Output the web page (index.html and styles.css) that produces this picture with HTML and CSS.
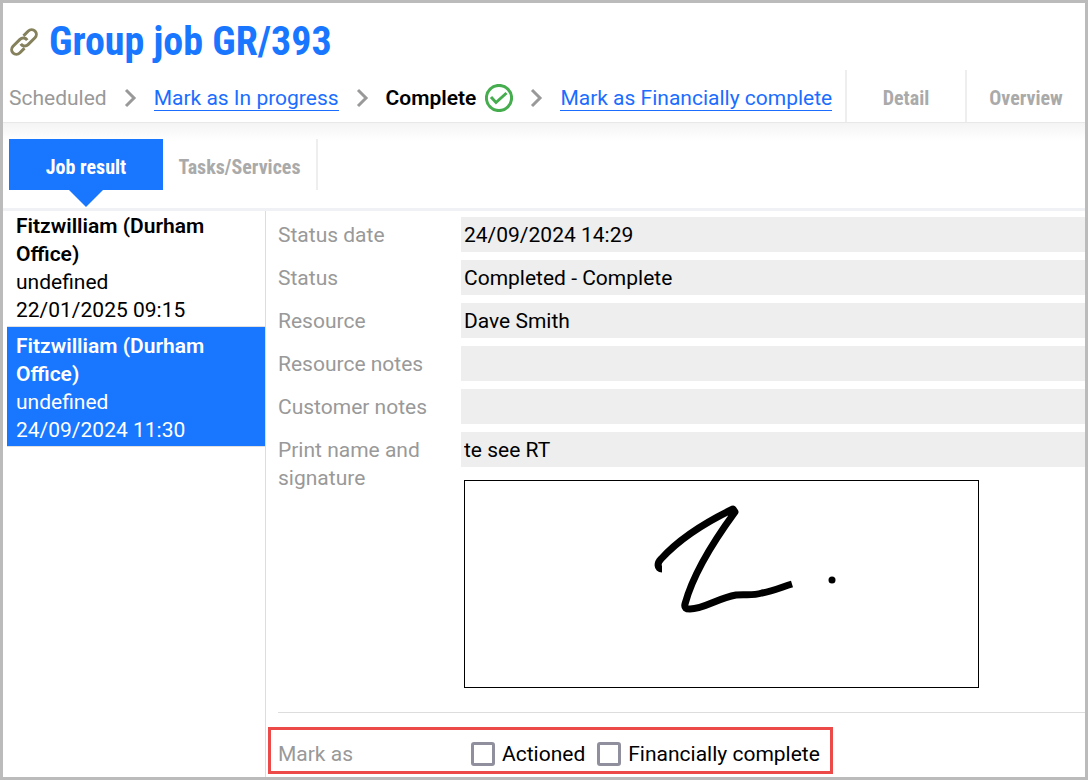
FILE: index.html
```html
<!DOCTYPE html>
<html lang="en">
<head>
    <meta charset="UTF-8">
    <meta name="viewport" content="width=device-width, initial-scale=1.0">
    <title>Group job GR/393</title>
    <link rel="stylesheet" href="styles.css">
</head>
<body>

<div class="page">
    <header class="header">
        <div class="title">
            <svg class="link-icon" width="28" height="28" viewBox="0 0 28 28">
                <g transform="rotate(-45 14 14)">
                    <path d="M10 18.700H3.200a4.700 4.700 0 0 1 0-9.400H13a4.700 4.700 0 0 1 4.600 5.700"/>
                    <path d="M18 9.300h6.800a4.700 4.700 0 0 1 0 9.400H15a4.700 4.700 0 0 1-4.600-5.700"/>
                </g>
            </svg>
            <h1>Group job GR/393</h1>
        </div>
        <div class="header-row">
            <div class="steps">
                <span class="step-muted">Scheduled</span>
                <svg class="chevron" width="13" height="20" viewBox="0 0 13 20"><path d="M2 2l8 8-8 8"/></svg>
                <a href="#">Mark as In progress</a>
                <svg class="chevron" width="13" height="20" viewBox="0 0 13 20"><path d="M2 2l8 8-8 8"/></svg>
                <strong>Complete</strong>
                <svg class="check" width="28" height="28" viewBox="0 0 28 28"><circle cx="14" cy="14" r="12.6"/><path d="M6 13l5 5.5L21.500 9"/></svg>
                <svg class="chevron" width="13" height="20" viewBox="0 0 13 20"><path d="M2 2l8 8-8 8"/></svg>
                <a href="#">Mark as Financially complete</a>
            </div>
            <nav class="views">
                <button type="button">Detail</button>
                <button type="button">Overview</button>
            </nav>
        </div>
    </header>

    <nav class="tabs">
        <button type="button" class="tab active">Job result</button>
        <button type="button" class="tab">Tasks/Services</button>
    </nav>

    <main class="content">
        <ul class="jobs">
            <li>
                <strong>Fitzwilliam (Durham Office)</strong>
                <span>undefined</span>
                <span>22/01/2025 09:15</span>
            </li>
            <li class="selected">
                <strong>Fitzwilliam (Durham Office)</strong>
                <span>undefined</span>
                <span>24/09/2024 11:30</span>
            </li>
        </ul>

        <form class="details">
            <div class="fields">
                <label for="statusDate">Status date</label>
                <input type="text" id="statusDate" value="24/09/2024 14:29" readonly>
                <label for="status">Status</label>
                <input type="text" id="status" value="Completed - Complete" readonly>
                <label for="resource">Resource</label>
                <input type="text" id="resource" value="Dave Smith" readonly>
                <label for="resourceNotes">Resource notes</label>
                <input type="text" id="resourceNotes" readonly>
                <label for="customerNotes">Customer notes</label>
                <input type="text" id="customerNotes" readonly>
                <label for="printName">Print name and signature</label>
                <div class="sign">
                    <input type="text" id="printName" value="te see RT" readonly>
                    <svg class="signature" viewBox="0 0 513 206" role="img" aria-label="Signature">
                        <path d="M197 88c-5 0-5-6-1-10 18-20 43-36 72-50l2 3c-22 30-42 62-50 92-1 4 1 5 5 5 14 0 28-11 46-14 9-1 16 1 26-2 11-2 20-6 30-9"/>
                        <circle cx="367" cy="99" r="3.500"/>
                    </svg>
                </div>
            </div>

            <div class="mark-row">
                <span class="mark-label" id="markAs">Mark as</span>
                <div class="checks" role="group" aria-labelledby="markAs">
                    <label><input type="checkbox"> Actioned</label>
                    <label><input type="checkbox"> Financially complete</label>
                </div>
            </div>
        </form>
    </main>
</div>

</body>
</html>
```

FILE: styles.css
```css
* {
    box-sizing: border-box;
}
body {
    margin: 0;
    font-family: Roboto, sans-serif;
    font-size: 21px;
    line-height: 28px;
    color: #000;
    background-color: #fff;
}
button, input {
    font: inherit;
    color: inherit;
}
strong {
    font-weight: 600;
}
.page {
    min-height: 100vh;
    display: flex;
    flex-direction: column;
    border: 3px solid #bbb;
}

/* header */
.header {
    border-bottom: 1px solid #e8e8e8;
}
.title {
    display: flex;
    align-items: center;
    gap: 11px;
    height: 67px;
    padding: 11px 7px 0;
}
.title h1 {
    margin: 0;
    font-family: "Roboto Condensed", "Liberation Sans Narrow", Roboto, sans-serif;
    font-size: 40px;
    line-height: 48px;
    color: #1976ff;
}
.link-icon {
    overflow: visible;
    fill: none;
    stroke: #85815c;
    stroke-width: 3;
}
.header-row {
    display: flex;
    justify-content: space-between;
}
.steps {
    display: flex;
    align-items: center;
    padding: 3px 0 0 6px;
    white-space: nowrap;
}
.steps a {
    padding-top: 2px;
    line-height: 24px;
    color: #1a6dff;
    text-decoration: none;
    border-bottom: 1px solid #1a6dff;
}
.step-muted {
    color: #999;
}
.chevron {
    margin: 0 17px;
    fill: none;
    stroke: #999;
    stroke-width: 3;
}
.check {
    margin-left: 9px;
    fill: none;
    stroke: #46ad4f;
    stroke-width: 3;
}
.views {
    display: flex;
}
.views button {
    width: 120px;
    height: 52px;
    padding: 4px 0 0;
    border: 0;
    border-left: 2px solid #eee;
    background: none;
}
.views button, .tab {
    font-family: "Roboto Condensed", "Liberation Sans Narrow", Roboto, sans-serif;
    font-size: 20px;
    font-weight: 700;
    color: #aaa;
}

/* tabs */
.tabs {
    display: flex;
    height: 88px;
    padding: 16px 6px 0;
    background: linear-gradient(#f4f4f4, #fff 18px);
    border-bottom: 3px solid #eff1f5;
}
.tab {
    position: relative;
    width: 155px;
    height: 51px;
    padding: 4px 0 0;
    border: 0;
    border-right: 2px solid #eee;
    background: none;
}
.tab.active {
    width: 154px;
    border: 0;
    color: #fff;
    background-color: #1976ff;
}
.tab.active::after {
    content: "";
    position: absolute;
    top: 100%;
    left: 50%;
    margin-left: -17px;
    border: 17px solid transparent;
    border-top-color: #1976ff;
    border-bottom: 0;
}

/* content */
.content {
    flex: 1;
    display: flex;
}
.jobs {
    flex: none;
    width: 263px;
    margin: 0;
    padding: 0 0 0 4px;
    border-right: 1px solid #ddd;
    list-style: none;
}
.jobs li {
    padding: 5px 40px 2px 9px;
    border-bottom: 1px solid #e0e0e0;
}
.jobs li:first-child {
    padding-top: 1px;
}
.jobs li.selected {
    color: #fff;
    background-color: #1976ff;
}
.jobs strong, .jobs span {
    display: block;
}
.details {
    flex: 1;
    min-width: 0;
}
.fields {
    display: grid;
    grid-template-columns: 183px 1fr;
    row-gap: 8px;
    margin-left: 12px;
    padding: 6px 0 24px;
    border-bottom: 1px solid #ddd;
}
.fields label {
    padding: 4px 10px 0 0;
    color: #999;
}
.fields input {
    display: block;
    width: 100%;
    height: 35px;
    padding: 0 3px;
    border: 0;
    outline: 0;
    background-color: #eee;
}
.signature {
    display: block;
    width: 100%;
    max-width: 515px;
    margin: 13px 0 0 3px;
    border: 1px solid #000;
}
.signature path {
    fill: none;
    stroke: #000;
    stroke-width: 7;
    stroke-linejoin: round;
}
.mark-row {
    display: flex;
    align-items: center;
    width: 565px;
    max-width: 100%;
    height: 47px;
    margin: 14px 0 0 2px;
    padding: 6px 7px 0;
    border: 3px solid #ec4a48;
}
.mark-label {
    width: 193px;
    color: #999;
}
.checks {
    display: flex;
    gap: 12px;
}
.checks label {
    display: flex;
    align-items: center;
    gap: 7px;
}
.checks input {
    appearance: none;
    width: 24px;
    height: 24px;
    margin: 0;
    border: 3px solid #8f8f9d;
    border-radius: 3px;
    background-color: #fff;
}
.checks input:checked {
    background-color: #1976ff;
}
```
